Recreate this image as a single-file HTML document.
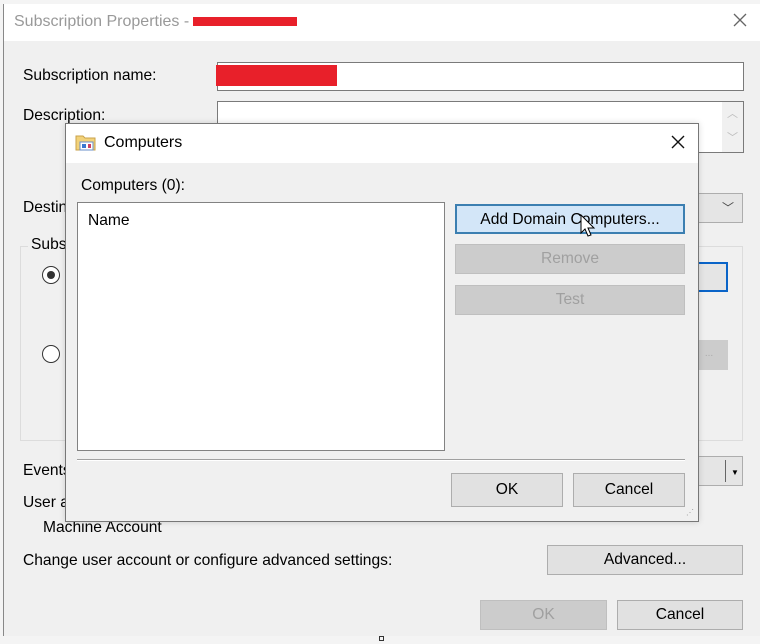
<!DOCTYPE html>
<html><head><meta charset="utf-8"><style>
*{box-sizing:border-box;margin:0;padding:0}
body{width:760px;height:644px;background:#f4f4f4;position:relative;overflow:hidden;font-family:"Liberation Sans",sans-serif;font-size:15.6px;color:#000}
.a{position:absolute}
.btn{position:absolute;background:#e1e1e1;border:1px solid #adadad;text-align:center;font-size:15.6px}
.dis{background:#cccccc;border-color:#bfbfbf;color:#a0a0a0}
</style></head><body>
<!-- outer window -->
<div class="a" style="left:3px;top:4px;width:757px;height:632px;background:#f0f0f0;border-left:1px solid #888;"></div>
<div class="a" style="left:4px;top:4px;width:756px;height:37px;background:#fff"></div>
<div class="a" style="left:14px;top:13px;color:#999;font-size:16px">Subscription Properties - </div>
<div class="a" style="left:193px;top:17px;width:104px;height:9px;background:#e8202a"></div>
<svg class="a" style="left:733px;top:13px" width="14" height="14"><path d="M1 1L13 13M13 1L1 13" stroke="#666" stroke-width="1.3"/></svg>
<div class="a" style="left:23px;top:67px">Subscription name:</div>
<div class="a" style="left:217px;top:62px;width:527px;height:29px;background:#fff;border:1px solid #7a7a7a"></div>
<div class="a" style="left:216px;top:65px;width:121px;height:21px;background:#e8202a"></div>
<div class="a" style="left:23px;top:107px">Description:</div>
<div class="a" style="left:217px;top:101px;width:527px;height:52px;background:#fff;border:1px solid #7a7a7a"></div>
<div class="a" style="left:722px;top:102px;width:21px;height:50px;background:#f0f0f0;color:#bbb;font-size:11px;text-align:center;line-height:24px">︿<br>﹀</div>
<div class="a" style="left:23px;top:199px">Destin</div>
<div class="a" style="left:690px;top:193px;width:53px;height:30px;background:#e5e5e5;border:1px solid #adadad;text-align:right;padding-right:8px;line-height:28px;color:#444;font-size:12px">﹀</div>
<div class="a" style="left:20px;top:246px;width:723px;height:195px;border:1px solid #dcdcdc"></div>
<div class="a" style="left:28px;top:236px;background:#f0f0f0;padding:0 3px">Subs</div>
<div class="a" style="left:42px;top:266px;width:18px;height:18px;border:1px solid #333;border-radius:50%;background:#fff"><div style="margin:4px;width:8px;height:8px;border-radius:50%;background:#333"></div></div>
<div class="a" style="left:42px;top:345px;width:18px;height:18px;border:1px solid #333;border-radius:50%;background:#fff"></div>
<div class="a" style="left:690px;top:262px;width:38px;height:30px;background:#e5e5e5;border:2px solid #0a64c8"></div>
<div class="a" style="left:690px;top:340px;width:38px;height:30px;background:#ccc;color:#aaa;font-size:10px;text-align:center;line-height:28px">...</div>
<div class="a" style="left:23px;top:462px">Events</div>
<div class="a" style="left:690px;top:456px;width:53px;height:30px;background:#e5e5e5;border:1px solid #adadad"></div>
<div class="a" style="left:725px;top:460px;width:1px;height:22px;background:#666"></div>
<div class="a" style="left:731px;top:468px;font-size:8px">▼</div>
<div class="a" style="left:23px;top:494px">User a</div>
<div class="a" style="left:43px;top:519px">Machine Account</div>
<div class="a" style="left:23px;top:552px">Change user account or configure advanced settings:</div>
<div class="btn" style="left:547px;top:545px;width:196px;height:30px;line-height:28px">Advanced...</div>
<div class="btn dis" style="left:480px;top:600px;width:127px;height:30px;line-height:28px">OK</div>
<div class="btn" style="left:617px;top:600px;width:126px;height:30px;line-height:28px">Cancel</div>
<div class="a" style="left:379px;top:636px;width:5px;height:5px;border:1px solid #333"></div>

<!-- inner dialog -->
<div class="a" style="left:65px;top:123px;width:634px;height:399px;background:#f0f0f0;border:1px solid #777;box-shadow:0 0 6px rgba(0,0,0,.15)"></div>
<div class="a" style="left:66px;top:124px;width:632px;height:39px;background:#fff"></div>
<svg class="a" style="left:75px;top:132px" width="22" height="20" viewBox="0 0 22 20">
<path d="M1 4h7l2 2h10v12H1z" fill="#f2d27a" stroke="#c9a24a"/>
<rect x="5" y="10" width="13" height="8" fill="#fff" stroke="#6a8fc8"/>
<rect x="7" y="12" width="4" height="4" fill="#3a78d0"/><rect x="13" y="12" width="3" height="4" fill="#d04060"/>
</svg>
<div class="a" style="left:104px;top:134px;font-size:16px">Computers</div>
<svg class="a" style="left:671px;top:135px" width="14" height="14"><path d="M1 1L13 13M13 1L1 13" stroke="#111" stroke-width="1.4"/></svg>
<div class="a" style="left:81px;top:177px">Computers (0):</div>
<div class="a" style="left:77px;top:202px;width:368px;height:249px;background:#fff;border:1px solid #828282"></div>
<div class="a" style="left:88px;top:212px">Name</div>
<div class="btn" style="left:455px;top:204px;width:230px;height:30px;line-height:28px;background:#d3e6f8;border:2px solid #3c7fb1">Add Domain Computers...</div>
<svg class="a" style="left:580px;top:214px" width="16" height="26" viewBox="0 0 16 26"><path d="M1 1v18l4-4 3 7 3-1-3-7h6z" fill="#fff" stroke="#000"/></svg>
<div class="btn dis" style="left:455px;top:244px;width:230px;height:30px;line-height:28px">Remove</div>
<div class="btn dis" style="left:455px;top:285px;width:230px;height:30px;line-height:28px">Test</div>
<div class="a" style="left:77px;top:459px;width:608px;height:2px;background:#a0a0a0;border-bottom:1px solid #fff"></div>
<div class="btn" style="left:451px;top:473px;width:112px;height:34px;line-height:32px">OK</div>
<div class="btn" style="left:573px;top:473px;width:112px;height:34px;line-height:32px">Cancel</div>
<div class="a" style="left:686px;top:508px;color:#999;font-size:8px">⋰</div>
</body></html>
